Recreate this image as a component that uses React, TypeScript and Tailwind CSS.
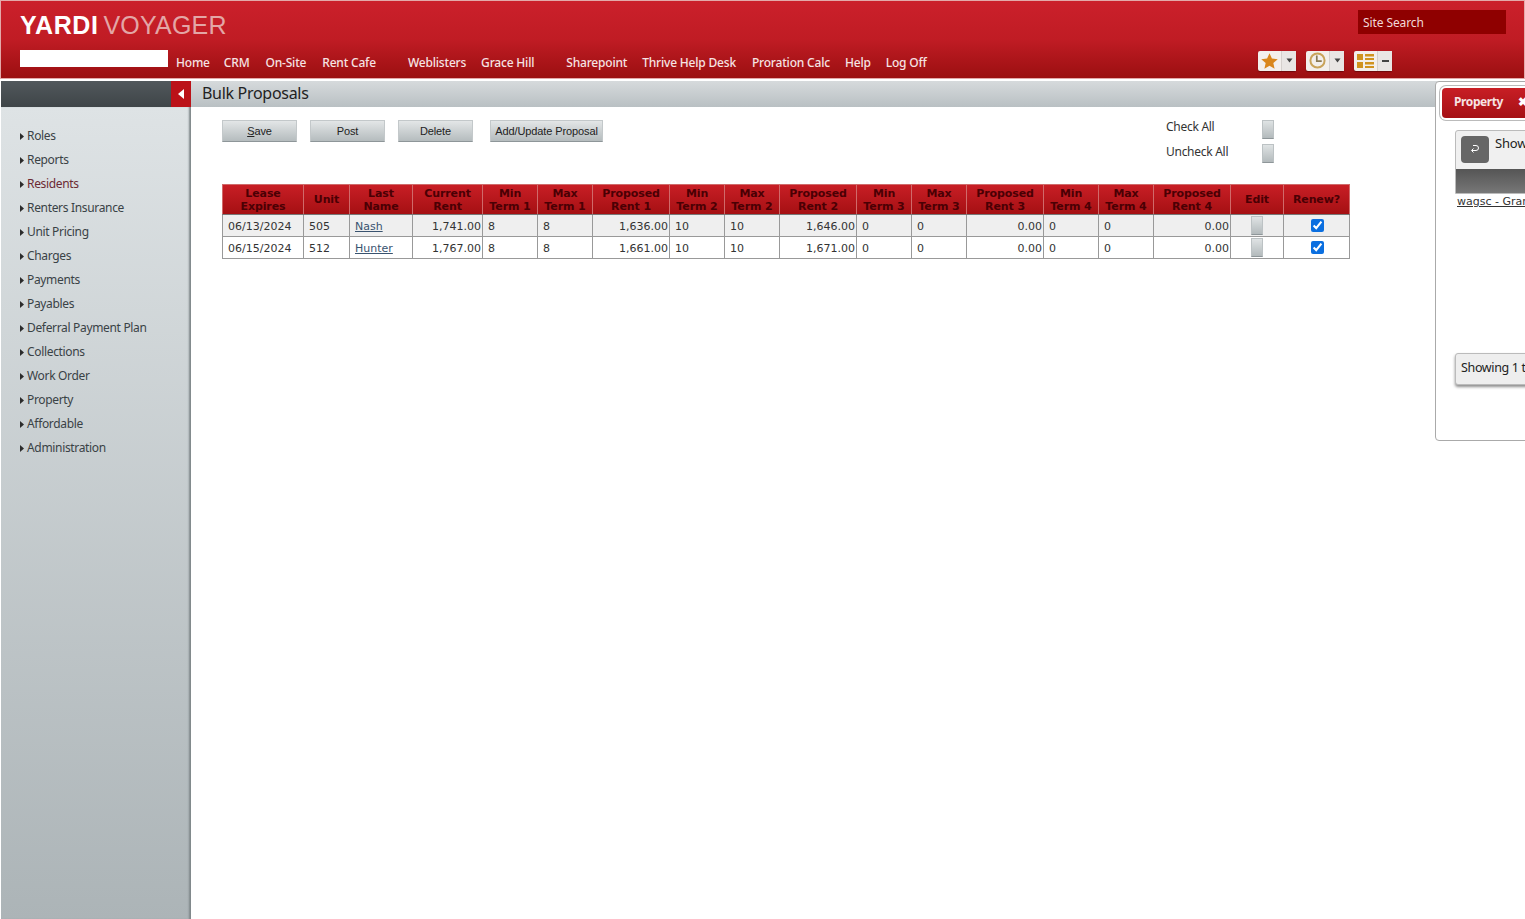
const navItems = [
  { label: "Home", cls: "" },
  { label: "CRM", cls: "ml-[14px]" },
  { label: "On-Site", cls: "ml-[16px]" },
  { label: "Rent Cafe", cls: "ml-[16px]" },
  { label: "Weblisters", cls: "ml-[32px]" },
  { label: "Grace Hill", cls: "ml-[15px]" },
  { label: "Sharepoint", cls: "ml-[32px]" },
  { label: "Thrive Help Desk", cls: "ml-[15px]" },
  { label: "Proration Calc", cls: "ml-[16px]" },
  { label: "Help", cls: "ml-[15px]" },
  { label: "Log Off", cls: "ml-[15px]" },
];

const sideItems = [
  "Roles",
  "Reports",
  "Residents",
  "Renters Insurance",
  "Unit Pricing",
  "Charges",
  "Payments",
  "Payables",
  "Deferral Payment Plan",
  "Collections",
  "Work Order",
  "Property",
  "Affordable",
  "Administration",
];

const columns = [
  { title: ["Lease", "Expires"], cls: "w-[81px]" },
  { title: ["Unit"], cls: "w-[46px]" },
  { title: ["Last", "Name"], cls: "w-[63px]" },
  { title: ["Current", "Rent"], cls: "w-[70px]" },
  { title: ["Min", "Term 1"], cls: "w-[55px]" },
  { title: ["Max", "Term 1"], cls: "w-[55px]" },
  { title: ["Proposed", "Rent 1"], cls: "w-[77px]" },
  { title: ["Min", "Term 2"], cls: "w-[55px]" },
  { title: ["Max", "Term 2"], cls: "w-[55px]" },
  { title: ["Proposed", "Rent 2"], cls: "w-[77px]" },
  { title: ["Min", "Term 3"], cls: "w-[55px]" },
  { title: ["Max", "Term 3"], cls: "w-[55px]" },
  { title: ["Proposed", "Rent 3"], cls: "w-[77px]" },
  { title: ["Min", "Term 4"], cls: "w-[55px]" },
  { title: ["Max", "Term 4"], cls: "w-[55px]" },
  { title: ["Proposed", "Rent 4"], cls: "w-[77px]" },
  { title: ["Edit"], cls: "w-[53px]" },
  { title: ["Renew?"], cls: "w-[66px]" },
];

const rows = [
  {
    date: "06/13/2024",
    unit: "505",
    name: "Nash",
    rent: "1,741.00",
    terms: [
      ["8", "8", "1,636.00"],
      ["10", "10", "1,646.00"],
      ["0", "0", "0.00"],
      ["0", "0", "0.00"],
    ],
    bg: "bg-[#efefef]",
  },
  {
    date: "06/15/2024",
    unit: "512",
    name: "Hunter",
    rent: "1,767.00",
    terms: [
      ["8", "8", "1,661.00"],
      ["10", "10", "1,671.00"],
      ["0", "0", "0.00"],
      ["0", "0", "0.00"],
    ],
    bg: "bg-white",
  },
];

const cell = "border border-[#999] pl-[5px] pr-0 pt-[3px] pb-0 text-left font-normal";
const cellNum = "border border-[#999] pl-0 pr-px pt-[3px] pb-0 text-right font-normal";

function GreyButton({ children, width }: { children: React.ReactNode; width: string }) {
  return (
    <button
      className={`${width} block h-[22px] pt-px whitespace-nowrap bg-gradient-to-b from-[#e3e6e7] to-[#b5bcbe] border border-[#c3c8ca] border-b-[#8e9699] text-[11px] tracking-[-0.1px] text-[#222] font-['Liberation_Sans',sans-serif]`}
    >
      {children}
    </button>
  );
}

function SmallGrey({ h }: { h: string }) {
  return (
    <div className={`w-[12px] ${h} bg-gradient-to-b from-[#dfe3e4] to-[#b3babc] border border-[#bcc2c4] border-b-[#8e9699]`} />
  );
}

function Caret() {
  return (
    <svg width="7" height="5" viewBox="0 0 7 5">
      <path d="M0.5 0.5h6L3.5 4.5z" fill="#444" />
    </svg>
  );
}

function ToolGroup({ children, right }: { children: React.ReactNode; right: React.ReactNode }) {
  return (
    <div className="flex h-[20px] rounded-[2px] bg-[#f3efec] shadow-[0_1px_1px_rgba(60,0,0,0.5)]">
      <div className="w-[24px] flex items-center justify-center border-r border-[#d5d0cd]">{children}</div>
      <div className="w-[14px] flex items-center justify-center bg-[#e9e6e4]">{right}</div>
    </div>
  );
}

export default function App() {
  return (
    <div className="relative h-[919px] w-[1525px] overflow-hidden bg-white font-['Noto_Sans',sans-serif]">
      {/* top banner */}
      <header className="h-[79px] border border-[#e3a9a9] bg-gradient-to-b from-[#cb202b] via-[#c01c24] to-[#9b0f10] pl-[18px] pr-[18px] relative">
        <div className="h-[49px] flex items-start justify-between">
          <div className="mt-[11px] ml-px font-['Liberation_Sans',sans-serif] text-[25px] leading-[27px] flex">
            <span className="font-bold text-white tracking-[0.6px]">YARDI</span>
            <span className="ml-[5px] text-[#e3a6a6] tracking-[0.2px]">VOYAGER</span>
          </div>
          <div className="mt-[9px] w-[148px] h-[24px] bg-[#8f0000] text-[#f2d9d9] text-[12px] tracking-[-0.1px] leading-[25px] pl-[5px]">
            Site Search
          </div>
        </div>
        <div className="flex items-center h-[24px]">
          <div className="w-[148px] h-[17px] -mt-[7px] ml-px bg-white" />
          <nav className="flex ml-[8px] mt-px text-[12px] font-medium tracking-[-0.19px] text-[#f6e3e3]">
            {navItems.map((n) => (
              <a key={n.label} className={n.cls}>
                {n.label}
              </a>
            ))}
          </nav>
          <div className="ml-auto flex gap-[10px] mr-[114px] -mt-[3px]">
            <ToolGroup right={<Caret />}>
              <svg width="19" height="18" viewBox="0 0 24 24">
                <path d="M12 1.5l3.2 7.2 7.8.8-5.9 5.2 1.7 7.7L12 18.4l-6.8 4 1.7-7.7L1 9.5l7.8-.8z" fill="#d9861c" />
              </svg>
            </ToolGroup>
            <ToolGroup right={<Caret />}>
              <svg width="17" height="17" viewBox="0 0 24 24" fill="none" stroke="#c9a35a" strokeWidth="2.8">
                <circle cx="12" cy="12" r="10" />
                <path d="M11 5v8h7" stroke="#8a7a55" strokeWidth="2.4" />
              </svg>
            </ToolGroup>
            <ToolGroup right={<div className="w-[7px] h-[2px] bg-[#444]" />}>
              <svg width="17" height="14" viewBox="0 0 17 14" fill="#d0931f">
                <rect x="0" y="0" width="6" height="6" />
                <rect x="0" y="8" width="6" height="6" />
                <rect x="8" y="0" width="9" height="2.5" />
                <rect x="8" y="4" width="9" height="2" />
                <rect x="8" y="8" width="9" height="2.5" />
                <rect x="8" y="12" width="9" height="2" />
              </svg>
            </ToolGroup>
          </div>
        </div>
      </header>

      <div className="flex h-[840px] pt-[2px]">
        {/* left menu */}
        <aside className="w-[191px] flex flex-col pl-px">
          <div className="h-[26px] flex justify-end bg-gradient-to-b from-[#51585c] to-[#3f4548]">
            <button className="w-[20px] bg-[#bb1218] flex items-center justify-center">
              <svg width="6" height="10" viewBox="0 0 6 10">
                <path d="M6 0v10L0 5z" fill="#fff" />
              </svg>
            </button>
          </div>
          <ul className="flex-1 bg-gradient-to-b from-[#dee3e5] to-[#acb4b7] shadow-[inset_-3px_0_2px_-1px_#7f878a] pt-[17px] pl-[19px] text-[12px] tracking-[-0.33px] text-[#3a4246]">
            {sideItems.map((s) => (
              <li key={s} className={`flex items-center h-[24px] ${s === "Residents" ? "text-[#6c2a33]" : ""}`}>
                <svg width="4" height="7" viewBox="0 0 4 7" className="mr-[3px]">
                  <path d="M0 0l4 3.5L0 7z" fill="#2b2b2b" />
                </svg>
                {s}
              </li>
            ))}
          </ul>
        </aside>

        {/* main content */}
        <main className="flex-1 flex flex-col min-w-0">
          <div className="h-[26px] shrink-0 bg-gradient-to-b from-[#d6dadc] to-[#b9c0c3] pl-[11px] text-[16px] tracking-[-0.3px] leading-[25px] text-[#222]">
            Bulk Proposals
          </div>
          <div className="pl-[31px] pt-[13px]">
            <div className="flex items-start h-[64px]">
              <div className="flex items-start">
                <GreyButton width="w-[75px]">
                  <span className="underline">S</span>ave
                </GreyButton>
                <div className="ml-[13px]">
                  <GreyButton width="w-[75px]">Post</GreyButton>
                </div>
                <div className="ml-[13px]">
                  <GreyButton width="w-[75px]">Delete</GreyButton>
                </div>
                <div className="ml-[17px]">
                  <GreyButton width="w-[113px]">Add/Update Proposal</GreyButton>
                </div>
              </div>
              <div className="ml-[563px] text-[12px] tracking-[-0.28px] text-[#333] w-[108px]">
                <div className="flex justify-between h-[24px]">
                  <span className="leading-[14px]">Check All</span>
                  <SmallGrey h="h-[19px]" />
                </div>
                <div className="flex justify-between">
                  <span className="leading-[14px] pt-px">Uncheck All</span>
                  <SmallGrey h="h-[19px]" />
                </div>
              </div>
            </div>
            <table className="table-fixed border-collapse w-[1127px] font-['DejaVu_Sans',sans-serif] text-[11px] text-[#333]">
              <colgroup>
                {columns.map((c, i) => (
                  <col key={i} className={c.cls} />
                ))}
              </colgroup>
              <thead>
                <tr className="h-[30px] bg-gradient-to-b from-[#c81e25] to-[#a40f12]">
                  {columns.map((c, i) => (
                    <th
                      key={i}
                      className="border border-[#d06a6a] border-b-[#777] p-0 text-center text-[11px] tracking-[-0.1px] leading-[13px] font-bold text-[#4a0004]"
                    >
                      {c.title.map((t) => (
                        <div key={t}>{t}</div>
                      ))}
                    </th>
                  ))}
                </tr>
              </thead>
              <tbody>
                {rows.map((r) => (
                  <tr key={r.date} className={`h-[22px] ${r.bg}`}>
                    <td className={cell}>{r.date}</td>
                    <td className={cell}>{r.unit}</td>
                    <td className={cell}>
                      <a className="underline text-[#39536f]">{r.name}</a>
                    </td>
                    <td className={cellNum}>{r.rent}</td>
                    {r.terms.flatMap((t, i) => [
                      <td key={`${i}a`} className={cell}>
                        {t[0]}
                      </td>,
                      <td key={`${i}b`} className={cell}>
                        {t[1]}
                      </td>,
                      <td key={`${i}c`} className={cellNum}>
                        {t[2]}
                      </td>,
                    ])}
                    <td className="border border-[#999] p-0">
                      <div className="flex justify-center">
                        <SmallGrey h="h-[19px]" />
                      </div>
                    </td>
                    <td className="border border-[#999] p-0">
                      <div className="flex justify-center pl-px">
                        <input type="checkbox" readOnly checked className="w-[13px] h-[13px] accent-[#0b6fe0]" />
                      </div>
                    </td>
                  </tr>
                ))}
              </tbody>
            </table>
          </div>
        </main>
      </div>

      {/* property panel, docked over the page */}
      <div className="absolute top-[81px] left-[1435px] w-[120px] h-[360px] bg-white border border-[#aaa] rounded-[4px] pt-[6px] pl-[6px]">
        <div className="h-[30px] w-[110px] bg-gradient-to-b from-[#c81e25] to-[#a51014] rounded-[4px] shadow-[0_0_0_2px_#fff,0_0_0_3px_#bbb] flex items-center pl-[12px] pb-[2px] text-[12px] tracking-[-0.4px] font-bold text-[#f6e3e3]">
          Property
          <span className="ml-[15px] text-white text-[12px] leading-none">✖</span>
        </div>
        <div className="mt-[12px] ml-[13px] h-[64px] border border-[#bbb] rounded-t-[3px] bg-[#f0f0f0] overflow-hidden">
          <div className="h-[38px] flex items-start pl-[5px] pt-[5px]">
            <div className="w-[28px] h-[27px] rounded-[4px] bg-[#666] flex items-center justify-center">
              <svg width="10" height="11" viewBox="0 0 10 11" fill="none" stroke="#fff" strokeWidth="1">
                <path d="M3 1.5h3a2.5 2.5 0 0 1 0 5H2M3.5 4.5L1.5 6.5l2 2" />
              </svg>
            </div>
            <span className="ml-[6px] text-[13px] tracking-[-0.2px] leading-[15px] text-[#222]">Show</span>
          </div>
          <div className="h-[24px] bg-gradient-to-b from-[#555] to-[#777]" />
        </div>
        <a className="block ml-[15px] font-['DejaVu_Sans',sans-serif] text-[11px] leading-[16px] underline text-[#333] whitespace-nowrap">
          wagsc - Grand
        </a>
        <div className="mt-[143px] ml-[13px] h-[32px] border border-[#bbb] rounded-[3px] bg-[#eee] shadow-[0_2px_3px_rgba(0,0,0,0.45)] pl-[5px] text-[12.5px] tracking-[-0.35px] leading-[28px] text-[#222] whitespace-nowrap">
          Showing 1 to
        </div>
      </div>
    </div>
  );
}
